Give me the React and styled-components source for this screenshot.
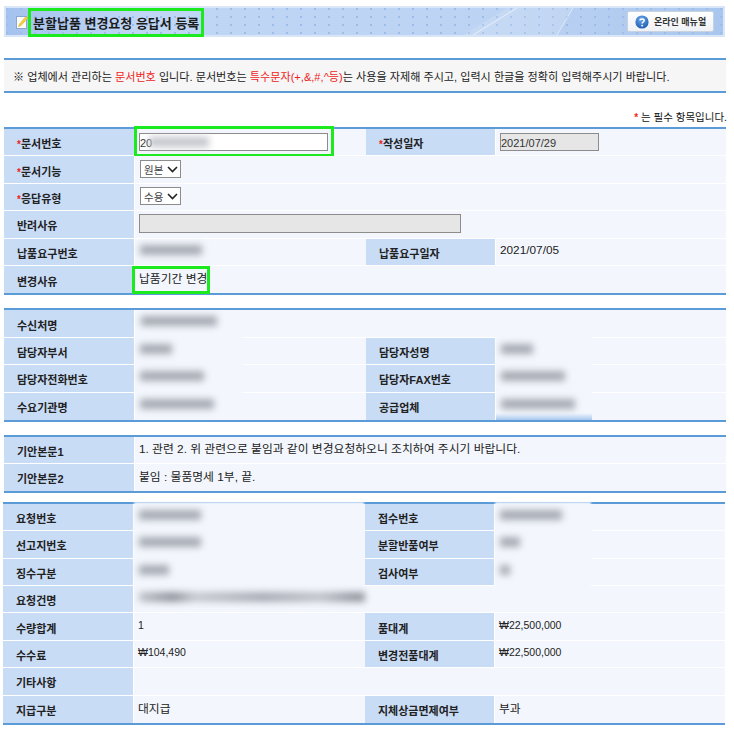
import React from 'react';
import styled, { createGlobalStyle } from 'styled-components';

const GlobalStyle = createGlobalStyle`
  html, body {
    margin: 0;
    padding: 0;
    background: #fff;
    color: #111;
    font-family: "Liberation Sans", "Noto Sans CJK KR", sans-serif;
    font-size: 11px;
  }
`;

const Page = styled.div`
  width: 734px;
  height: 734px;
  overflow: hidden;
  padding: 6px 8px 0 4px;
  box-sizing: border-box;
`;

const Header = styled.header`
  position: relative;
  height: 31px;
  margin-right: 1px;
  box-sizing: border-box;
  border: 2px solid #d8e6f8;
  display: flex;
  align-items: center;
  justify-content: space-between;
  padding: 0 9px 0 10px;
  background-color: #b7d0f2;
  background-image:
    radial-gradient(circle at 1px 1px, #9dbde8 1px, transparent 1.2px),
    linear-gradient(90deg, #a4c2ee 0, #c0d6f5 18%, #bcd3f3 70%, #a9c6ee 100%);
  background-size: 14px 8px, 100% 100%;
`;

const HeaderArt = styled.svg`
  position: absolute;
  right: 0;
  top: 0;
  pointer-events: none;
`;

const TitleGroup = styled.div`
  position: relative;
  display: flex;
  align-items: center;
`;

const TitleBox = styled.h1`
  margin: -1px 0 -3px 0;
  height: 29px;
  box-sizing: border-box;
  border: 3px solid #1bea1f;
  display: flex;
  align-items: center;
  padding: 0 2px;
  font-size: 13px;
  font-weight: 700;
  color: #1c1c1c;
`;

const ManualButton = styled.button`
  position: relative;
  width: 87px;
  height: 21px;
  border: 1px solid #c9d3e0;
  border-radius: 2px;
  background: linear-gradient(#fff, #eef1f5);
  display: flex;
  align-items: center;
  gap: 5px;
  padding: 0 0 0 7px;
  font: 700 9px "Liberation Sans", "Noto Sans CJK KR", sans-serif;
  color: #333;
`;

const Notice = styled.div`
  margin-top: 21px;
  height: 35px;
  box-sizing: border-box;
  border-top: 2px solid #5b9bd8;
  border-bottom: 2px solid #5b9bd8;
  background: #f6f6f6;
  display: flex;
  align-items: center;
  padding-left: 9px;
  font-size: 11.1px;
  color: #222;
  white-space: nowrap;
`;

const Red = styled.span`
  color: #f01c1c;
`;

const RequiredNote = styled.div`
  margin: 17px -1px 0 0;
  height: 17px;
  text-align: right;
  font-size: 10.5px;
  line-height: 15px;
`;

const Star = styled.span`
  color: #ef1f1f;
  font-weight: 700;
  font-size: 10px;
`;

const Table = styled.table`
  width: 722px;
  margin-left: ${(p) => (p.$shift ? '-1px' : '0')};
  margin-top: ${(p) => p.$gap || 0}px;
  table-layout: fixed;
  border-collapse: separate;
  border-spacing: 0;
  border-top: 2px solid #5b9bd8;
  border-bottom: 2px solid #5b9bd8;
`;

const Row = styled.tr`
  height: ${(p) => p.$height || 27.4}px;
`;

const Label = styled.th`
  position: relative;
  padding: 2px 0 0 13px;
  background: #c9dcf6;
  border-right: 1px solid #fff;
  border-bottom: 1px solid #fff;
  box-sizing: border-box;
  text-align: left;
  font-size: 11px;
  font-weight: 700;
  color: #222;
  white-space: nowrap;
  tr:last-child > & {
    border-bottom: 0;
  }
`;

const Value = styled.td`
  position: relative;
  padding: 0 0 4px 4px;
  background: #f3f7fd;
  border-bottom: 1px solid #fff;
  box-sizing: border-box;
  font-size: ${(p) => (p.$money ? '10.5px' : '11.8px')};
  color: #222;
  white-space: nowrap;
  tr:last-child > & {
    border-bottom: 0;
  }
`;

const TextInput = styled.input`
  display: block;
  box-sizing: border-box;
  width: ${(p) => p.$width}px;
  height: ${(p) => p.$height || 18}px;
  margin: 3px 0 0;
  padding: 2px 0 0;
  border: 1px solid #8c8c8c;
  border-radius: 0;
  background: ${(p) => (p.disabled ? '#e6e6e6' : '#fff')};
  color: #333;
  font: 11px "Liberation Sans", "Noto Sans CJK KR", sans-serif;
`;

const FakeSelect = styled.div`
  width: 41px;
  height: 18px;
  margin: 3px 0 0 1px;
  box-sizing: border-box;
  border: 1px solid #8c8c8c;
  background: #fff;
  display: flex;
  align-items: center;
  justify-content: space-between;
  padding: 0 2px 0 3px;
  font-size: 10.5px;
  color: #444;
`;

const Highlight = styled.div`
  position: absolute;
  box-sizing: border-box;
  border: 3px solid #1bea1f;
  left: ${(p) => p.$left}px;
  top: ${(p) => p.$top}px;
  width: ${(p) => p.$width}px;
  height: ${(p) => p.$height}px;
  pointer-events: none;
`;

const Redact = styled.div`
  position: absolute;
  left: 0;
  top: -2px;
  width: ${(p) => p.$width}px;
  height: 32px;
  background: #f3f7fd;
  filter: blur(1px);
  pointer-events: none;
`;

const Smudge = styled.div`
  position: absolute;
  left: ${(p) => p.$left || 5}px;
  top: ${(p) => p.$top || 6}px;
  width: ${(p) => p.$width}px;
  height: 10px;
  background: ${(p) => p.$color || '#a6aab3'};
  filter: blur(3.5px);
  pointer-events: none;
`;

const BlueFade = styled.div`
  position: absolute;
  left: 0;
  bottom: 0;
  width: 96px;
  height: 7px;
  background: linear-gradient(transparent, #a9c9ee);
  pointer-events: none;
`;

function Masked({ width, cover }) {
  return (
    <>
      <Redact $width={cover} />
      <Smudge $width={width} />
    </>
  );
}

function PencilIcon() {
  return (
    <svg width="12" height="14" viewBox="0 0 12 14">
      <rect x="0.5" y="1.5" width="10" height="12" fill="#fdfdf6" stroke="#8aa7d4" />
      <path d="M2.5 11.5 L3.5 9 L10 1.5 L11.8 3.2 L5 10.5 Z" fill="#f6cf3f" stroke="#d9a520" strokeWidth="0.5" />
    </svg>
  );
}

function HelpIcon() {
  return (
    <svg width="14" height="14" viewBox="0 0 14 14">
      <defs>
        <radialGradient id="helpBall" cx="45%" cy="30%" r="75%">
          <stop offset="0" stopColor="#6aa8ea" />
          <stop offset="1" stopColor="#1b58b0" />
        </radialGradient>
      </defs>
      <circle cx="7" cy="7" r="6.6" fill="url(#helpBall)" />
      <path d="M4.9 5.4 C5 3.4 9.2 3.4 9.2 5.5 C9.2 7 7.1 7 7.1 8.6" fill="none" stroke="#fff" strokeWidth="1.5" />
      <circle cx="7.1" cy="10.6" r="0.95" fill="#fff" />
    </svg>
  );
}

function Chevron() {
  return (
    <svg width="11" height="7" viewBox="0 0 11 7">
      <path d="M1 1 L5.5 5.5 L10 1" fill="none" stroke="#222" strokeWidth="1.6" />
    </svg>
  );
}

function Swoosh() {
  return (
    <HeaderArt width="260" height="27" viewBox="0 0 260 27">
      <path d="M0 27 L44 0 L110 0 L94 27 Z" fill="#ffffff" opacity="0.14" />
      <path d="M10 27 L54 0" stroke="#ffffff" strokeWidth="1" opacity="0.6" fill="none" />
      <path d="M94 27 L110 0" stroke="#ffffff" strokeWidth="1" opacity="0.5" fill="none" />
    </HeaderArt>
  );
}

function Cols() {
  return (
    <colgroup>
      <col style={{ width: 131 }} />
      <col style={{ width: 231 }} />
      <col style={{ width: 130 }} />
      <col />
    </colgroup>
  );
}

export default function App() {
  return (
    <Page>
      <GlobalStyle />
      <Header>
        <Swoosh />
        <TitleGroup>
          <PencilIcon />
          <TitleBox>분할납품 변경요청 응답서 등록</TitleBox>
        </TitleGroup>
        <ManualButton>
          <HelpIcon />
          온라인 매뉴얼
        </ManualButton>
      </Header>

      <Notice>
        <span>
          ※ 업체에서 관리하는 <Red>문서번호</Red> 입니다. 문서번호는 <Red>특수문자(+,&amp;,#,^등)</Red>는 사용을 자제해 주시고, 입력시 한글을 정확히 입력해주시기 바랍니다.
        </span>
      </Notice>

      <RequiredNote>
        <Star>*</Star> 는 필수 항목입니다.
      </RequiredNote>

      <Table>
        <Cols />
        <tbody>
          <Row>
            <Label><Star>*</Star>문서번호</Label>
            <Value>
              <TextInput $width={189} defaultValue="20" />
              <Smudge $left={14} $top={8} $width={60} $color="#c3c6cc" />
              <Highlight $left={-1} $top={-3} $width={200} $height={31} />
            </Value>
            <Label><Star>*</Star>작성일자</Label>
            <Value><TextInput $width={99} disabled defaultValue="2021/07/29" /></Value>
          </Row>
          <Row>
            <Label><Star>*</Star>문서기능</Label>
            <Value>
              <FakeSelect>원본<Chevron /></FakeSelect>
            </Value>
            <Value colSpan={2} />
          </Row>
          <Row>
            <Label><Star>*</Star>응답유형</Label>
            <Value>
              <FakeSelect>수용<Chevron /></FakeSelect>
            </Value>
            <Value colSpan={2} />
          </Row>
          <Row>
            <Label>반려사유</Label>
            <Value colSpan={3}><TextInput $width={322} $height={19} disabled /></Value>
          </Row>
          <Row>
            <Label>납품요구번호</Label>
            <Value><Smudge $width={62} /></Value>
            <Label>납품요구일자</Label>
            <Value>2021/07/05</Value>
          </Row>
          <Row>
            <Label>변경사유</Label>
            <Value>
              납품기간 변경
              <Highlight $left={-3} $top={0} $width={78} $height={28} />
            </Value>
            <Value colSpan={2} />
          </Row>
        </tbody>
      </Table>

      <Table $gap={13}>
        <Cols />
        <tbody>
          <Row>
            <Label>수신처명</Label>
            <Value colSpan={3}><Smudge $left={6} $width={76} /></Value>
          </Row>
          <Row>
            <Label>담당자부서</Label>
            <Value><Masked width={32} cover={108} /></Value>
            <Label>담당자성명</Label>
            <Value><Masked width={32} cover={96} /></Value>
          </Row>
          <Row>
            <Label>담당자전화번호</Label>
            <Value><Masked width={64} cover={108} /></Value>
            <Label>담당자FAX번호</Label>
            <Value><Masked width={64} cover={96} /></Value>
          </Row>
          <Row>
            <Label>수요기관명</Label>
            <Value><Smudge $left={5} $width={74} /></Value>
            <Label>공급업체</Label>
            <Value>
              <Smudge $left={5} $width={74} />
              <BlueFade />
            </Value>
          </Row>
        </tbody>
      </Table>

      <Table $gap={13}>
        <Cols />
        <tbody>
          <Row $height={27}>
            <Label>기안본문1</Label>
            <Value colSpan={3}>1. 관련 2. 위 관련으로 붙임과 같이 변경요청하오니 조치하여 주시기 바랍니다.</Value>
          </Row>
          <Row $height={27}>
            <Label>기안본문2</Label>
            <Value colSpan={3}>붙임 : 물품명세 1부, 끝.</Value>
          </Row>
        </tbody>
      </Table>

      <Table $gap={9} $shift>
        <Cols />
        <tbody>
          <Row>
            <Label>요청번호</Label>
            <Value><Masked width={62} cover={230} /></Value>
            <Label>접수번호</Label>
            <Value><Masked width={62} cover={96} /></Value>
          </Row>
          <Row>
            <Label>선고지번호</Label>
            <Value><Masked width={62} cover={230} /></Value>
            <Label>분할반품여부</Label>
            <Value><Masked width={20} cover={96} /></Value>
          </Row>
          <Row>
            <Label>징수구분</Label>
            <Value><Masked width={30} cover={230} /></Value>
            <Label>검사여부</Label>
            <Value><Masked width={10} cover={96} /></Value>
          </Row>
          <Row>
            <Label>요청건명</Label>
            <Value colSpan={3}>
              <Smudge
                $left={5}
                $width={226}
                $color="linear-gradient(90deg, #c0c3ca 0, #8f939c 15%, #c6c9d0 25%, #a6aab3 55%, #c0c3ca 80%, #969aa3 95%)"
              />
            </Value>
          </Row>
          <Row>
            <Label>수량합계</Label>
            <Value $money>1</Value>
            <Label>품대계</Label>
            <Value $money>₩22,500,000</Value>
          </Row>
          <Row>
            <Label>수수료</Label>
            <Value $money>₩104,490</Value>
            <Label>변경전품대계</Label>
            <Value $money>₩22,500,000</Value>
          </Row>
          <Row>
            <Label>기타사항</Label>
            <Value colSpan={3} />
          </Row>
          <Row>
            <Label>지급구분</Label>
            <Value>대지급</Value>
            <Label>지체상금면제여부</Label>
            <Value>부과</Value>
          </Row>
        </tbody>
      </Table>
    </Page>
  );
}
